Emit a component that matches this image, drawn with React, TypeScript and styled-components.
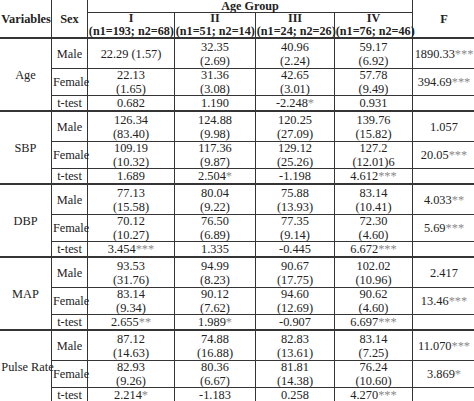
import React from "react";
import styled, { createGlobalStyle } from "styled-components";

const GlobalStyle = createGlobalStyle`
  html, body {
    margin: 0;
    padding: 0;
    background: #ffffff;
  }
  body {
    font-family: "Liberation Serif", "Times New Roman", serif;
    color: #222222;
    overflow: hidden;
  }
`;

const lineColor = "#353535";

const Grid = styled.div`
  display: grid;
  grid-template-columns: 52px 36px 87px 81px 79px 78px 62px;
  grid-template-rows: 13px 26px repeat(5, 30px 27px 16px);
  font-size: 13px;
  line-height: 14px;
`;

type CellProps = {
  $col: number;
  $row: number;
  $colSpan?: number;
  $rowSpan?: number;
  $bottom?: number;
  $right?: boolean;
  $bold?: boolean;
};

const Cell = styled.div<CellProps>`
  grid-column: ${(p) => p.$col} / span ${(p) => p.$colSpan ?? 1};
  grid-row: ${(p) => p.$row} / span ${(p) => p.$rowSpan ?? 1};
  box-sizing: border-box;
  display: flex;
  flex-direction: column;
  justify-content: center;
  min-width: 0;
  border-bottom: ${(p) => p.$bottom ?? 1}px solid ${lineColor};
  border-right: ${(p) => (p.$right === false ? "none" : `1px solid ${lineColor}`)};
  font-weight: ${(p) => (p.$bold ? 700 : 400)};
`;

// the source table is set in a slightly condensed Times
const Line = styled.div`
  text-align: center;
  white-space: nowrap;
  line-height: 14px;
  transform: scaleX(0.95);
`;

const HeadLine = styled(Line)`
  font-size: 12.4px;
  line-height: 13px;
  transform: scaleX(0.98);
`;

const Stars = styled.span`
  color: #8a8a8a;
`;

const Value = ({ text }: { text: string }) => {
  const m = text.match(/^(.*?)(\*+)$/);
  if (!m) return <>{text}</>;
  return (
    <>
      {m[1]}
      <Stars>{m[2]}</Stars>
    </>
  );
};

type Group = {
  name: string;
  male: string[][];
  female: string[][];
  ttest: string[];
  fMale: string;
  fFemale: string;
};

const groups: Group[] = [
  {
    name: "Age",
    male: [["22.29 (1.57)"], ["32.35", "(2.69)"], ["40.96", "(2.24)"], ["59.17", "(6.92)"]],
    female: [["22.13", "(1.65)"], ["31.36", "(3.08)"], ["42.65", "(3.01)"], ["57.78", "(9.49)"]],
    ttest: ["0.682", "1.190", "-2.248*", "0.931"],
    fMale: "1890.33***",
    fFemale: "394.69***",
  },
  {
    name: "SBP",
    male: [["126.34", "(83.40)"], ["124.88", "(9.98)"], ["120.25", "(27.09)"], ["139.76", "(15.82)"]],
    female: [["109.19", "(10.32)"], ["117.36", "(9.87)"], ["129.12", "(25.26)"], ["127.2", "(12.01)6"]],
    ttest: ["1.689", "2.504*", "-1.198", "4.612***"],
    fMale: "1.057",
    fFemale: "20.05***",
  },
  {
    name: "DBP",
    male: [["77.13", "(15.58)"], ["80.04", "(9.22)"], ["75.88", "(13.93)"], ["83.14", "(10.41)"]],
    female: [["70.12", "(10.27)"], ["76.50", "(6.89)"], ["77.35", "(9.14)"], ["72.30", "(4.60)"]],
    ttest: ["3.454***", "1.335", "-0.445", "6.672***"],
    fMale: "4.033**",
    fFemale: "5.69***",
  },
  {
    name: "MAP",
    male: [["93.53", "(31.76)"], ["94.99", "(8.23)"], ["90.67", "(17.75)"], ["102.02", "(10.96)"]],
    female: [["83.14", "(9.34)"], ["90.12", "(7.62)"], ["94.60", "(12.69)"], ["90.62", "(4.60)"]],
    ttest: ["2.655**", "1.989*", "-0.907", "6.697***"],
    fMale: "2.417",
    fFemale: "13.46***",
  },
  {
    name: "Pulse Rate",
    male: [["87.12", "(14.63)"], ["74.88", "(16.88)"], ["82.83", "(13.61)"], ["83.14", "(7.25)"]],
    female: [["82.93", "(9.26)"], ["80.36", "(6.67)"], ["81.81", "(14.38)"], ["76.24", "(10.60)"]],
    ttest: ["2.214*", "-1.183", "0.258", "4.270***"],
    fMale: "11.070***",
    fFemale: "3.869*",
  },
];

const ageGroups = [
  ["I", "(n1=193; n2=68)"],
  ["II", "(n1=51; n2=14)"],
  ["III", "(n1=24; n2=26)"],
  ["IV", "(n1=76; n2=46)"],
];

const App = () => {
  return (
    <>
      <GlobalStyle />
      <Grid>
        <Cell $col={1} $row={1} $rowSpan={2} $bottom={2} $bold>
          <Line>Variables</Line>
        </Cell>
        <Cell $col={2} $row={1} $rowSpan={2} $bottom={2} $bold>
          <Line>Sex</Line>
        </Cell>
        <Cell $col={3} $row={1} $colSpan={4} $bold>
          <HeadLine>Age Group</HeadLine>
        </Cell>
        <Cell $col={7} $row={1} $rowSpan={2} $bottom={2} $right={false} $bold>
          <Line>F</Line>
        </Cell>
        {ageGroups.map((g, i) => (
          <Cell key={g[0]} $col={3 + i} $row={2} $bottom={2} $bold>
            <HeadLine>{g[0]}</HeadLine>
            <HeadLine>{g[1]}</HeadLine>
          </Cell>
        ))}

        {groups.map((g, gi) => {
          const r = 3 + gi * 3;
          return (
            <React.Fragment key={g.name}>
              <Cell $col={1} $row={r} $rowSpan={3} $bottom={2}>
                <Line>{g.name}</Line>
              </Cell>
              <Cell $col={2} $row={r}>
                <Line>Male</Line>
              </Cell>
              <Cell $col={2} $row={r + 1}>
                <Line>Female</Line>
              </Cell>
              <Cell $col={2} $row={r + 2} $bottom={2}>
                <Line>t-test</Line>
              </Cell>
              {g.male.map((v, i) => (
                <Cell key={`m${i}`} $col={3 + i} $row={r}>
                  {v.map((t) => (
                    <Line key={t}>{t}</Line>
                  ))}
                </Cell>
              ))}
              {g.female.map((v, i) => (
                <Cell key={`f${i}`} $col={3 + i} $row={r + 1}>
                  {v.map((t) => (
                    <Line key={t}>{t}</Line>
                  ))}
                </Cell>
              ))}
              {g.ttest.map((t, i) => (
                <Cell key={`t${i}`} $col={3 + i} $row={r + 2} $bottom={2}>
                  <Line>
                    <Value text={t} />
                  </Line>
                </Cell>
              ))}
              <Cell $col={7} $row={r} $right={false}>
                <Line>
                  <Value text={g.fMale} />
                </Line>
              </Cell>
              <Cell $col={7} $row={r + 1} $right={false}>
                <Line>
                  <Value text={g.fFemale} />
                </Line>
              </Cell>
              <Cell $col={7} $row={r + 2} $right={false} $bottom={2} />
            </React.Fragment>
          );
        })}
      </Grid>
    </>
  );
};

export default App;
